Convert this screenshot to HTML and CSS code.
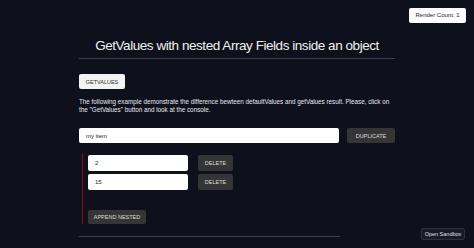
FILE: index.html
```html
<!DOCTYPE html>
<html lang="en">
<head>
  <meta charset="UTF-8" />
  <title>GetValues with nested Array Fields</title>
  <link rel="stylesheet" href="styles.css">
</head>
<body>
  <div class="render-count">Render Count: 1</div>
  <main class="container">
    <h1>GetValues with nested Array Fields inside an object</h1>
    <button class="btn-light">GETVALUES</button>
    <p class="intro">The following example demonstrate the difference bewteen defaultValues and getValues result. Please, click on the "GetValues" button and look at the console.</p>
    <form class="form">
      <div class="row">
        <input class="field field-wide" type="text" value="my item">
        <button type="button" class="btn-dark btn-dup">DUPLICATE</button>
      </div>
      <div class="nested">
        <div class="row nested-row">
          <input class="field field-small" type="text" value="2">
          <button type="button" class="btn-dark btn-del">DELETE</button>
        </div>
        <div class="row nested-row">
          <input class="field field-small" type="text" value="15">
          <button type="button" class="btn-dark btn-del">DELETE</button>
        </div>
        <button type="button" class="btn-dark btn-append">APPEND NESTED</button>
      </div>
      <hr class="form-end">
    </form>
  </main>
  <button class="sandbox">Open Sandbox</button>
</body>
</html>
```

FILE: styles.css
```css
* { box-sizing: border-box; margin: 0; padding: 0; }
body {
  background: #0e101c;
  color: #eceef3;
  font-family: 'Liberation Sans', Arial, sans-serif;
  width: 474px;
  height: 248px;
  overflow: hidden;
}
.render-count {
  position: absolute;
  top: 8px;
  right: 8px;
  width: 57px;
  height: 15px;
  background: #fff;
  color: #222;
  border-radius: 2px;
  font-size: 6px;
  line-height: 15px;
  text-align: center;
}
.container {
  width: 316px;
  margin: 0 auto;
}
h1 {
  font-size: 13.5px;
  font-weight: 400;
  letter-spacing: -0.45px;
  line-height: 18px;
  white-space: nowrap;
  text-align: center;
  padding: 37px 0 3px;
  border-bottom: 1px solid #3a3f52;
  color: #f0f0f0;
}
button {
  font-family: 'Liberation Sans', Arial, sans-serif;
  border: none;
  border-radius: 2px;
  font-size: 5.5px;
  cursor: pointer;
}
.btn-light {
  display: block;
  margin-top: 15px;
  width: 46px;
  height: 15px;
  background: #f3f3f3;
  color: #333;
}
.intro {
  margin-top: 9px;
  font-size: 6.3px;
  line-height: 7.6px;
  color: #e8e8ec;
}
.form {
  margin-top: 15px;
}
.row {
  display: flex;
  align-items: center;
}
.field {
  border: none;
  border-radius: 2px;
  background: #fff;
  color: #222;
  font-family: 'Liberation Sans', Arial, sans-serif;
  font-size: 6px;
  padding: 0 7px;
}
.field-wide {
  width: 260px;
  height: 15px;
}
.btn-dark {
  background: #353535;
  color: #dcdcdc;
}
.btn-dup {
  margin-left: 8px;
  width: 48px;
  height: 15px;
}
.nested {
  margin: 10px 0 0 3px;
  border-left: 1px solid #8b0a14;
  padding: 2px 0 0 5px;
}
.nested-row {
  margin-bottom: 3px;
}
.field-small {
  width: 100px;
  height: 16px;
}
.btn-del {
  margin-left: 10px;
  width: 35px;
  height: 16px;
}
.btn-append {
  display: block;
  margin-top: 20px;
  width: 58px;
  height: 14px;
}
.form-end {
  margin-top: 12px;
  width: 261px;
  border: none;
  border-top: 1px solid #3a3f52;
}
.sandbox {
  position: absolute;
  right: 9px;
  bottom: 8px;
  width: 44px;
  height: 12px;
  background: #181a26;
  border: 1px solid #2e3040;
  color: #e0e0e0;
  font-size: 5.5px;
}
```
